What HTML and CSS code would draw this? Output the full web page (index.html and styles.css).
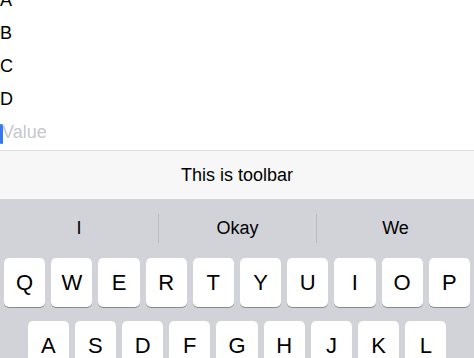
FILE: index.html
```html
<!DOCTYPE html>
<html>
<head>
<meta charset="utf-8">
<link rel="stylesheet" href="styles.css">
</head>
<body>
<div class="list">
  <div class="row">A</div>
  <div class="row">B</div>
  <div class="row">C</div>
  <div class="row">D</div>
  <div class="row input"><span class="cursor"></span><span class="placeholder">Value</span></div>
</div>
<div class="toolbar">This is toolbar</div>
<div class="keyboard">
  <div class="suggestions">
    <div class="sugg">I</div>
    <div class="sugg">Okay</div>
    <div class="sugg">We</div>
  </div>
  <div class="keys row1">
    <div class="key">Q</div><div class="key">W</div><div class="key">E</div><div class="key">R</div><div class="key">T</div><div class="key">Y</div><div class="key">U</div><div class="key">I</div><div class="key">O</div><div class="key">P</div>
  </div>
  <div class="keys row2">
    <div class="key">A</div><div class="key">S</div><div class="key">D</div><div class="key">F</div><div class="key">G</div><div class="key">H</div><div class="key">J</div><div class="key">K</div><div class="key">L</div>
  </div>
</div>
</body>
</html>
```
FILE: styles.css
```css
html, body {
  margin: 0;
  padding: 0;
  width: 474px;
  height: 358px;
  overflow: hidden;
  background: #ffffff;
  font-family: "Liberation Sans", Arial, sans-serif;
  color: #000;
}
.list {
  margin-top: -16px;
}
.row {
  height: 33px;
  line-height: 33px;
  font-size: 18px;
}
.input {
  display: flex;
  align-items: center;
}
.cursor {
  width: 3px;
  height: 20px;
  background: #3478f6;
  border-radius: 1px;
  margin-top: 2px;
}
.placeholder {
  color: #c7c7cd;
  margin-left: -1px;
}
.toolbar {
  margin-top: 1px;
  height: 48px;
  border-top: 1px solid #e0e0e3;
  background: #f7f7f7;
  display: flex;
  align-items: center;
  justify-content: center;
  font-size: 18px;
}
.keyboard {
  background: #d1d3d9;
  height: 160px;
}
.suggestions {
  height: 59px;
  display: grid;
  grid-template-columns: 1fr 1fr 1fr;
  align-items: center;
}
.sugg {
  height: 29px;
  display: flex;
  align-items: center;
  justify-content: center;
  font-size: 18px;
  border-left: 1px solid #b8babf;
}
.sugg:first-child {
  border-left: none;
}
.keys {
  display: flex;
  gap: 6px;
  padding: 0 4px;
}
.row1 {
  height: 50px;
}
.row2 {
  margin-top: 13px;
  justify-content: center;
}
.key {
  width: 41.2px;
  height: 49px;
  flex: none;
  background: #ffffff;
  border-radius: 5px;
  box-shadow: 0 1px 0 #8a8b8f;
  display: flex;
  align-items: center;
  justify-content: center;
  font-size: 22px;
}
```
